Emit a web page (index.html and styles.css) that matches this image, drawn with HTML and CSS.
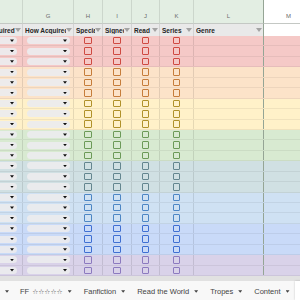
FILE: index.html
```html
<!DOCTYPE html>
<html lang="en">
<head>
<meta charset="UTF-8">
<meta name="viewport" content="width=device-width, initial-scale=1.0">
<title>Book Tracker</title>
<link rel="stylesheet" href="styles.css">
</head>
<body>
    <div class="sheet">
        <div class="grid">
            <div class="letters">
                <div class="letter">F</div>
                <div class="letter">G</div>
                <div class="letter">H</div>
                <div class="letter">I</div>
                <div class="letter">J</div>
                <div class="letter">K</div>
                <div class="letter">L</div>
                <div class="letter plain">M</div>
            </div>
            <div class="heads">
                <div class="head"><span>Where Acquired</span><i class="filter"></i></div>
                <div class="head"><span>How Acquired</span><i class="filter"></i></div>
                <div class="head"><span>Special Edition</span><i class="filter"></i></div>
                <div class="head"><span>Signed</span><i class="filter"></i></div>
                <div class="head"><span>Read</span><i class="filter"></i></div>
                <div class="head"><span>Series</span><i class="filter"></i></div>
                <div class="head"><span>Genre</span><i class="filter"></i></div>
                <div class="head plain"></div>
            </div>
            <div id="rows"></div>
        </div>
        <div class="scroll"></div>
        <div class="tabs">
            <div class="tab cut"><i class="caret"></i></div>
            <div class="tab">FF <span class="stars">☆☆☆☆☆</span><i class="caret"></i></div>
            <div class="tab">Fanfiction<i class="caret"></i></div>
            <div class="tab">Read the World<i class="caret"></i></div>
            <div class="tab">Tropes<i class="caret"></i></div>
            <div class="tab">Content<i class="caret"></i></div>
            <div class="tab active"></div>
        </div>
    </div>

    <script>
        var groups = [
            ['red', 3], ['orange', 3], ['yellow', 3], ['green', 3],
            ['teal', 3], ['lightblue', 3], ['blue', 3], ['purple', 2]
        ];
        var rows = document.getElementById('rows');

        groups.forEach(function (g) {
            for (var n = 0; n < g[1]; n++) {
                var row = document.createElement('div');
                row.className = 'row ' + g[0];
                // F and G hold dropdown chips
                for (var c = 0; c < 2; c++) {
                    row.innerHTML += '<div class="cell"><span class="chip"><i class="arrow"></i></span></div>';
                }
                // H..K are checkbox columns
                for (var k = 0; k < 4; k++) {
                    row.innerHTML += '<div class="cell"><span class="box"></span></div>';
                }
                row.innerHTML += '<div class="cell"></div><div class="cell"></div>';
                rows.appendChild(row);
            }
        });
    </script>
</body>
</html>
```
FILE: styles.css
```css
* {
    box-sizing: border-box;
}
body {
    margin: 0;
    width: 300px;
    height: 300px;
    overflow: hidden;
    font-family: "Liberation Sans", Arial, sans-serif;
    background-color: #fff;
}
.sheet {
    display: flex;
    flex-direction: column;
    height: 300px;
    overflow: hidden;
}

/* Grid */
.grid {
    --cols: 60px 51px 29px 29px 28px 34px 70px 50px;
    margin-left: -37px;
}
.letters, .heads, .row {
    display: grid;
    grid-template-columns: var(--cols);
}
.letters {
    height: 24px;
}
.letter {
    display: flex;
    align-items: flex-end;
    justify-content: center;
    padding-bottom: 4px;
    background-color: #e3eee3;
    border-right: 1px solid #ccd6cc;
    border-bottom: 1px solid #c4c8c4;
    font-size: 6px;
    color: #6b6b6b;
}
.letter.plain {
    background-color: #fff;
}
.heads {
    height: 12px;
}
.head {
    display: flex;
    align-items: center;
    padding-left: 2px;
    background-color: #e9e9e9;
    border-right: 1px solid #d2d2d2;
    font-size: 6.5px;
    font-weight: bold;
    color: #262626;
}
.head span {
    flex: 1;
    min-width: 0;
    overflow: hidden;
    white-space: nowrap;
}
.head.plain {
    background-color: #fff;
}
.filter {
    flex: none;
    width: 6px;
    height: 4px;
    margin-right: 1px;
    background-color: #a3a3a3;
    clip-path: polygon(0 0, 100% 0, 50% 100%);
}
.letters > :nth-child(7),
.heads > :nth-child(7),
.row > :nth-child(7) {
    border-right-color: #95a595;
}

/* Data rows */
.row {
    height: 10.45px;
    background-color: var(--bg);
    border-bottom: 1px solid rgba(0, 0, 0, 0.06);
}
.cell {
    display: flex;
    align-items: center;
    justify-content: center;
    border-right: 1px solid rgba(0, 0, 0, 0.1);
}
.chip {
    flex: 1;
    display: flex;
    align-items: center;
    justify-content: flex-end;
    height: 7px;
    margin: 0 3px 0 4px;
    padding-right: 3px;
    border-radius: 4px;
    background-color: rgba(236, 236, 238, 0.92);
}
.row > :first-child .chip {
    margin-right: 5px;
}
.arrow {
    width: 4px;
    height: 2.5px;
    background-color: #111;
    clip-path: polygon(0 0, 100% 0, 50% 100%);
}
.box {
    width: 7.5px;
    height: 7.5px;
    border: 1.2px solid var(--check);
    border-radius: 1px;
}
.red { --bg: #f5c9c7; --check: #cf4a42; }
.orange { --bg: #fce3c9; --check: #c67d3b; }
.yellow { --bg: #fff1c9; --check: #b0912a; }
.green { --bg: #d8ead1; --check: #6c9a58; }
.teal { --bg: #d0e0e3; --check: #64868f; }
.lightblue { --bg: #cfe1f3; --check: #4d86c4; }
.blue { --bg: #c9daf8; --check: #3f6fd2; }
.purple { --bg: #d9d2e9; --check: #8c7abf; }

/* Sheet tabs */
.scroll {
    height: 5px;
    margin-top: auto;
    background-color: #e1e1e1;
}
.tabs {
    display: flex;
    align-items: center;
    height: 19px;
    padding-top: 2px;
    background-color: #f8f8f8;
    font-size: 7.5px;
    color: #444;
    white-space: nowrap;
}
.tab {
    display: flex;
    align-items: center;
    gap: 5px;
    padding: 0 5.5px 0 6.5px;
}
.tab.cut {
    padding: 0 4.5px 0 5px;
}
.stars {
    margin-left: -2px;
    font-family: "DejaVu Sans", sans-serif;
    font-size: 6.8px;
}
.caret {
    width: 4px;
    height: 2.5px;
    background-color: #444;
    clip-path: polygon(0 0, 100% 0, 50% 100%);
}
.tab.active {
    align-self: stretch;
    flex: 1;
    margin-top: -2px;
    background-color: #fff;
    box-shadow: 0 0 2px rgba(0, 0, 0, 0.2);
}
```
